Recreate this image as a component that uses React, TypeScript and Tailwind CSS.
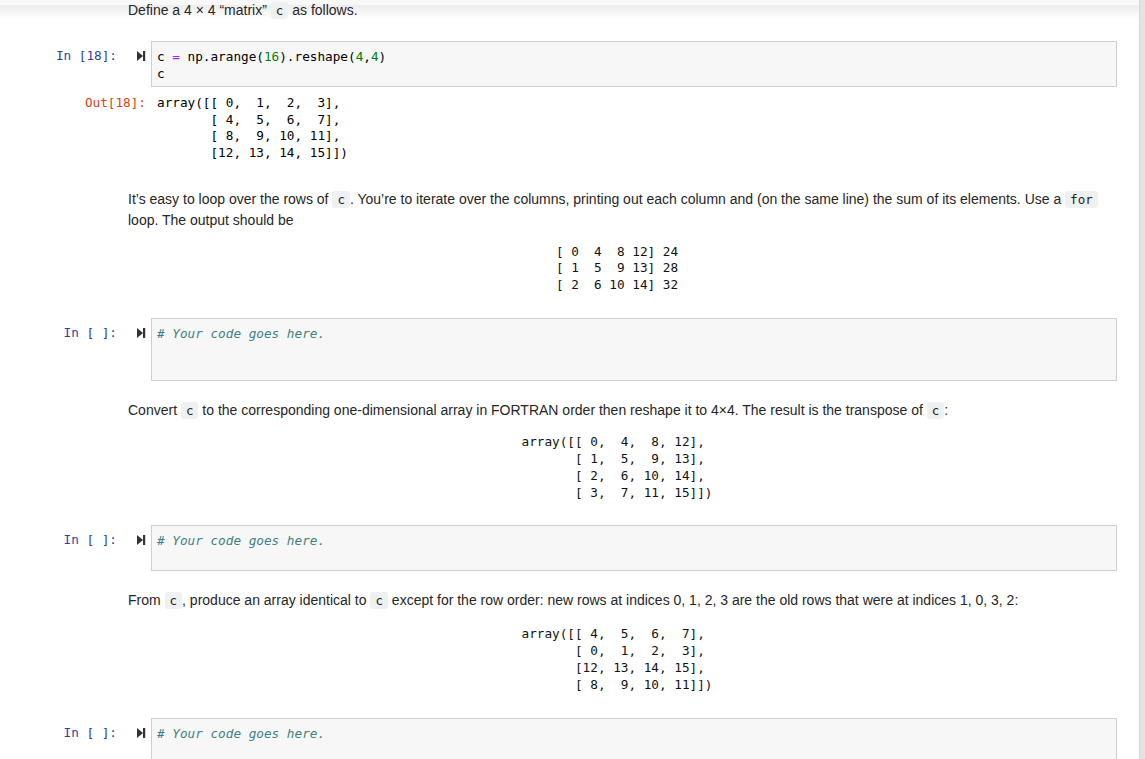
import React from "react";

const mono = { fontFamily: '"DejaVu Sans Mono", "Liberation Mono", monospace' };

function RunIcon() {
  return (
    <svg width="9" height="10" viewBox="0 0 9 10" className="block">
      <polygon points="0,0 6,5 0,10" fill="#333" />
      <rect x="6" y="0" width="2.2" height="10" fill="#333" />
    </svg>
  );
}

function IC({ children }: { children: React.ReactNode }) {
  return (
    <code
      className="bg-[#eff0f1] rounded-[3px] px-[5px] py-[1px] text-[12.5px] text-[#222]"
      style={mono}
    >
      {children}
    </code>
  );
}

function CodeCell({
  label,
  lines,
  mt,
}: {
  label: string;
  lines: React.ReactNode[];
  mt: string;
}) {
  return (
    <div className={`flex ${mt}`}>
      <div className="w-[151px] shrink-0 flex pt-[6px]">
        <div
          className="w-[117px] text-right text-[12.7px] leading-[17px] text-[#303F9F] whitespace-pre"
          style={mono}
        >
          {label}
        </div>
        <div className="ml-[20px] pt-[4px]">
          <RunIcon />
        </div>
      </div>
      <div className="flex-1 mr-[22px] border border-[#cfcfcf] bg-[#f7f7f7] pl-[5px] pt-[6px] pb-[4px]">
        {lines.map((l, i) => (
          <div
            key={i}
            className="text-[12.7px] leading-[17px] text-black whitespace-pre h-[17px]"
            style={mono}
          >
            {l}
          </div>
        ))}
      </div>
    </div>
  );
}

const comment = (
  <span className="italic text-[#408080]"># Your code goes here.</span>
);

function Md({ children, mt }: { children: React.ReactNode; mt: string }) {
  return (
    <div
      className={`pl-[128px] pr-[33px] text-[14px] leading-[21px] text-[#262626] ${mt}`}
      style={{ fontFamily: '"Liberation Sans", Arial, sans-serif' }}
    >
      {children}
    </div>
  );
}

function CenteredPre({ text, mt, lh }: { text: string; mt: string; lh: string }) {
  return (
    <div className={`pl-[128px] pr-[33px] flex justify-center ${mt}`}>
      <pre className={`text-[12.7px] ${lh} text-[#111] m-0`} style={mono}>
        {text}
      </pre>
    </div>
  );
}

export default function App() {
  return (
    <div className="relative w-[1145px] h-[759px] overflow-hidden bg-white flex">
      <div className="absolute left-0 top-0 w-[1139px] h-[5px] bg-[#f8f8f8] pointer-events-none" />
      <div className="absolute left-0 top-[5px] w-[1139px] h-[14px] bg-linear-to-b from-[#ececec] to-white/0 pointer-events-none" />
      <div className="relative flex-1 flex flex-col">
        <Md mt="mt-[0px]">
          Define a 4 × 4 “matrix” <IC>c</IC> as follows.
        </Md>
        <CodeCell
          mt="mt-[20px]"
          label="In [18]:"
          lines={[
            <>
              c <span className="text-[#AA22FF]">=</span> np.arange(
              <span className="text-[#008000]">16</span>).reshape(
              <span className="text-[#008000]">4</span>,
              <span className="text-[#008000]">4</span>)
            </>,
            <>c</>,
          ]}
        />
        <div className="flex mt-[8px]">
          <div
            className="w-[146px] shrink-0 text-right text-[12.7px] leading-[16.7px] text-[#D84315]"
            style={mono}
          >
            Out[18]:
          </div>
          <pre
            className="ml-[11px] m-0 text-[12.7px] leading-[16.7px] text-black"
            style={mono}
          >
            {`array([[ 0,  1,  2,  3],
       [ 4,  5,  6,  7],
       [ 8,  9, 10, 11],
       [12, 13, 14, 15]])`}
          </pre>
        </div>
        <Md mt="mt-[27px]">
          It’s easy to loop over the rows of <IC>c</IC>. You’re to iterate over the
          columns, printing out each column and (on the same line) the sum of its
          elements. Use a <IC>for</IC> loop. The output should be
        </Md>
        <CenteredPre
          mt="mt-[13px]"
          lh="leading-[16.6px]"
          text={`[ 0  4  8 12] 24
[ 1  5  9 13] 28
[ 2  6 10 14] 32`}
        />
        <CodeCell mt="mt-[24px]" label="In [ ]:" lines={[comment, "", ""]} />
        <Md mt="mt-[19px]">
          Convert <IC>c</IC> to the corresponding one-dimensional array in FORTRAN
          order then reshape it to 4×4. The result is the transpose of <IC>c</IC>:
        </Md>
        <CenteredPre
          mt="mt-[12px]"
          lh="leading-[17px]"
          text={`array([[ 0,  4,  8, 12],
       [ 1,  5,  9, 13],
       [ 2,  6, 10, 14],
       [ 3,  7, 11, 15]])`}
        />
        <CodeCell mt="mt-[24px]" label="In [ ]:" lines={[comment, ""]} />
        <Md mt="mt-[19px]">
          From <IC>c</IC>, produce an array identical to <IC>c</IC> except for the
          row order: new rows at indices 0, 1, 2, 3 are the old rows that were at
          indices 1, 0, 3, 2:
        </Md>
        <CenteredPre
          mt="mt-[14px]"
          lh="leading-[17.3px]"
          text={`array([[ 4,  5,  6,  7],
       [ 0,  1,  2,  3],
       [12, 13, 14, 15],
       [ 8,  9, 10, 11]])`}
        />
        <CodeCell mt="mt-[24px]" label="In [ ]:" lines={[comment, "", ""]} />
      </div>
      <div className="w-[6px] shrink-0 bg-[#e4e4e4] border-l border-[#d6d6d6]" />
    </div>
  );
}
